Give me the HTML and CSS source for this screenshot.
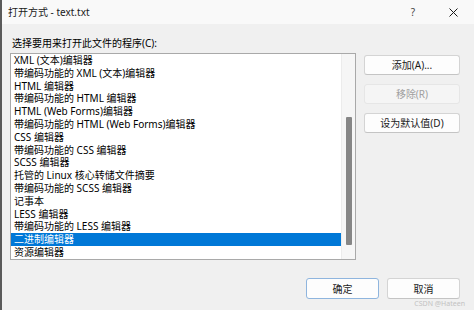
FILE: index.html
```html
<!DOCTYPE html>
<html lang="zh-CN">
<head>
<meta charset="utf-8">
<title>打开方式 - text.txt</title>
<link rel="stylesheet" href="styles.css">
</head>
<body>
<div class="window">
  <div class="titlebar">
    <span class="title">打开方式 - text.txt</span>
    <span class="help">?</span>
    <span class="close">
      <svg width="9" height="9" viewBox="0 0 9 9"><path d="M0.5 0.5 L8.5 8.5 M8.5 0.5 L0.5 8.5" stroke="#1a1a1a" stroke-width="1" fill="none"/></svg>
    </span>
  </div>
  <div class="content">
    <div class="label">选择要用来打开此文件的程序(C):</div>
    <div class="main">
      <div class="listbox">
        <ul class="items">
          <li>XML (文本)编辑器</li>
          <li>带编码功能的 XML (文本)编辑器</li>
          <li>HTML 编辑器</li>
          <li>带编码功能的 HTML 编辑器</li>
          <li>HTML (Web Forms)编辑器</li>
          <li>带编码功能的 HTML (Web Forms)编辑器</li>
          <li>CSS 编辑器</li>
          <li>带编码功能的 CSS 编辑器</li>
          <li>SCSS 编辑器</li>
          <li>托管的 Linux 核心转储文件摘要</li>
          <li>带编码功能的 SCSS 编辑器</li>
          <li>记事本</li>
          <li>LESS 编辑器</li>
          <li>带编码功能的 LESS 编辑器</li>
          <li class="selected">二进制编辑器</li>
          <li>资源编辑器</li>
        </ul>
        <div class="scrollbar"><div class="thumb"></div></div>
      </div>
      <div class="side">
        <button class="btn">添加(A)...</button>
        <button class="btn disabled">移除(R)</button>
        <button class="btn">设为默认值(D)</button>
      </div>
    </div>
    <div class="footer">
      <button class="btn default">确定</button>
      <button class="btn">取消</button>
    </div>
  </div>
  <div class="watermark">CSDN @Hateen</div>
</div>
</body>
</html>
```
FILE: styles.css
```css
* { box-sizing: border-box; }
html, body { margin: 0; padding: 0; }
body {
  width: 474px;
  height: 310px;
  overflow: hidden;
  font-family: "Noto Sans", "Noto Sans CJK SC", sans-serif;
  font-size: 10px;
  color: #000;
  background: #f0f0f0;
}
.window {
  position: relative;
  width: 474px;
  height: 310px;
  background: #f0f0f0;
  border-left: 2px solid #5a5a5a;
  display: flex;
  flex-direction: column;
}
.titlebar {
  height: 24px;
  background: #f9f9f9;
  display: flex;
  align-items: center;
  padding-left: 6px;
}
.title {
  flex: 1;
  line-height: 14px;
  color: #1a1a1a;
}
.help {
  width: 12px;
  text-align: center;
  font-size: 10px;
  color: #444;
  margin-right: 30px;
  line-height: 12px;
}
.close {
  display: flex;
  width: 9px;
  height: 9px;
  margin-right: 16px;
}
.content {
  flex: 1;
  display: flex;
  flex-direction: column;
  padding: 0 14px 0 8px;
}
.label {
  margin-top: 12px;
  height: 17px;
  line-height: 14px;
  padding-left: 2px;
}
.main {
  display: flex;
  gap: 8px;
}
.listbox {
  width: 346px;
  height: 207px;
  border: 1px solid #a9a9a9;
  background: #fff;
  display: flex;
}
.items {
  list-style: none;
  margin: 0;
  padding: 0;
  flex: 1;
}
.items li {
  height: 12.8px;
  line-height: 12.8px;
  padding-left: 3px;
  white-space: nowrap;
}
.items li.selected {
  background: #0078d7;
  color: #fff;
}
.scrollbar {
  width: 14px;
  background: #f6f6f6;
  border-left: 1px solid #ececec;
  display: flex;
  justify-content: center;
}
.thumb {
  margin-top: 63px;
  width: 6px;
  height: 128px;
  background: #868686;
  border-radius: 1px;
}
.side {
  display: flex;
  flex-direction: column;
  gap: 9px;
  padding-top: 2px;
}
.btn {
  width: 96px;
  height: 20px;
  padding: 0;
  font-family: inherit;
  font-size: 10px;
  line-height: 14px;
  color: #1a1a1a;
  background: #fdfdfd;
  border: 1px solid #d4d4d4;
  border-bottom-color: #c4c4c4;
  border-radius: 3px;
}
.btn.disabled {
  background: #f5f5f5;
  border-color: #e6e6e6;
  color: #a0a0a0;
}
.footer {
  margin-top: 18px;
  display: flex;
  justify-content: flex-end;
  gap: 8px;
}
.footer .btn {
  width: 73px;
  height: 21px;
}
.btn.default {
  border: 1px solid #8fb5de;
}
.watermark {
  position: absolute;
  right: 9px;
  bottom: 2px;
  font-size: 7px;
  line-height: 8px;
  color: #c2c2c2;
}
```
